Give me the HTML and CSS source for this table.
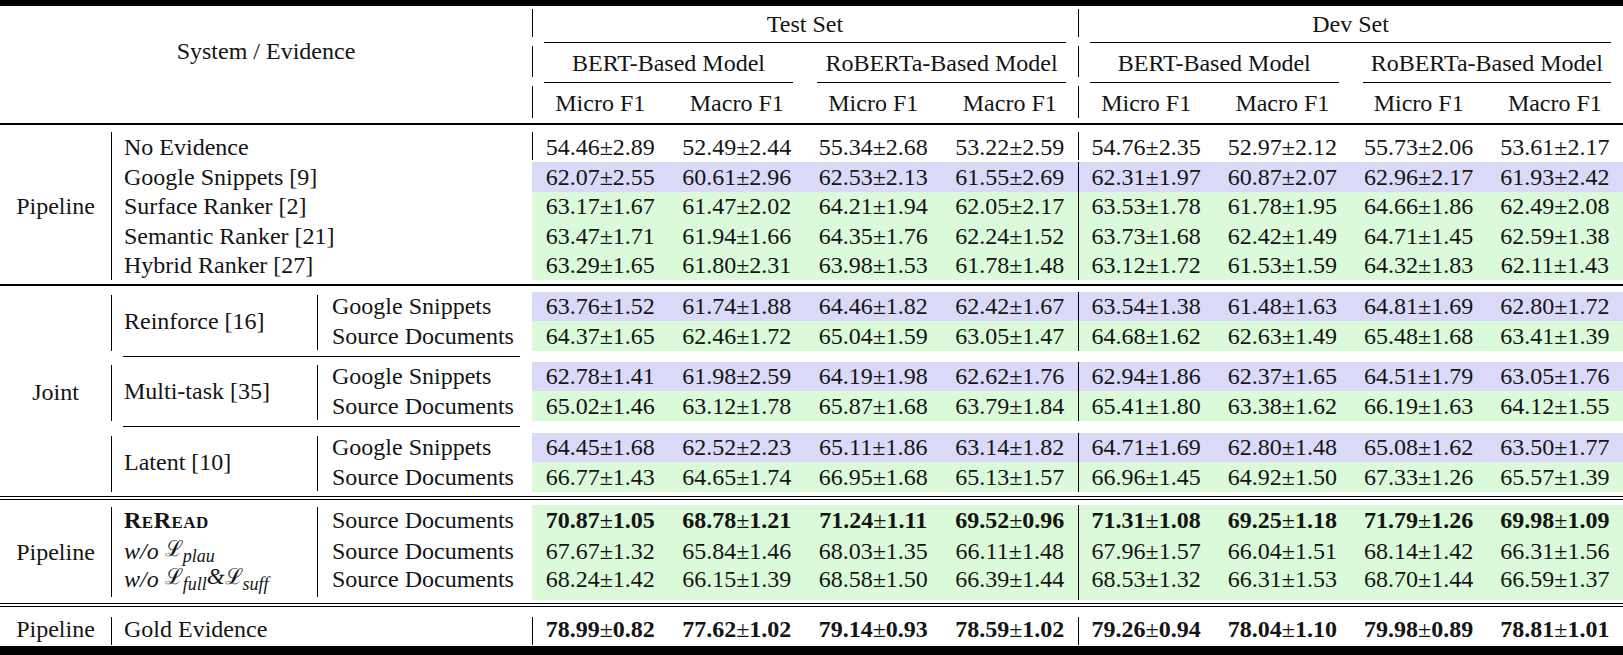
FILE: index.html
```html
<!DOCTYPE html>
<html>
<head>
<meta charset="utf-8">
<link rel="stylesheet" href="styles.css">
</head>
<body>
<div class="table">
  <div class="rule-top"></div>

  <div class="sec head">
    <div class="c sysev">System / Evidence</div>
    <div class="c vl hv t-all">Test Set</div>
    <div class="c vl hv d-all">Dev Set</div>
    <div class="cmid t-all"></div>
    <div class="cmid d-all"></div>
    <div class="c vl hv t-bert">BERT-Based Model</div>
    <div class="c t-rob">RoBERTa-Based Model</div>
    <div class="c vl hv d-bert">BERT-Based Model</div>
    <div class="c d-rob">RoBERTa-Based Model</div>
    <div class="cmid t-bert"></div>
    <div class="cmid t-rob"></div>
    <div class="cmid d-bert"></div>
    <div class="cmid d-rob"></div>
    <div class="c vl hv">Micro F1</div>
    <div class="c">Macro F1</div>
    <div class="c">Micro F1</div>
    <div class="c">Macro F1</div>
    <div class="c vl hv">Micro F1</div>
    <div class="c">Macro F1</div>
    <div class="c">Micro F1</div>
    <div class="c">Macro F1</div>
  </div>
  <div class="rule-mid"></div>

  <div class="sec pipe">
    <div class="c grp">Pipeline</div>

    <div class="c l vl m23 first">No Evidence</div>
    <div class="c vl r1">54.46±2.89</div><div class="c">52.49±2.44</div><div class="c">55.34±2.68</div><div class="c">53.22±2.59</div>
    <div class="c vl r1">54.76±2.35</div><div class="c">52.97±2.12</div><div class="c">55.73±2.06</div><div class="c">53.61±2.17</div>

    <div class="c l vl m23">Google Snippets [9]</div>
    <div class="c b">62.07±2.55</div><div class="c b">60.61±2.96</div><div class="c b">62.53±2.13</div><div class="c b">61.55±2.69</div>
    <div class="c b vl">62.31±1.97</div><div class="c b">60.87±2.07</div><div class="c b">62.96±2.17</div><div class="c b">61.93±2.42</div>

    <div class="c l vl m23">Surface Ranker [2]</div>
    <div class="c g">63.17±1.67</div><div class="c g">61.47±2.02</div><div class="c g">64.21±1.94</div><div class="c g">62.05±2.17</div>
    <div class="c g vl">63.53±1.78</div><div class="c g">61.78±1.95</div><div class="c g">64.66±1.86</div><div class="c g">62.49±2.08</div>

    <div class="c l vl m23">Semantic Ranker [21]</div>
    <div class="c g">63.47±1.71</div><div class="c g">61.94±1.66</div><div class="c g">64.35±1.76</div><div class="c g">62.24±1.52</div>
    <div class="c g vl">63.73±1.68</div><div class="c g">62.42±1.49</div><div class="c g">64.71±1.45</div><div class="c g">62.59±1.38</div>

    <div class="c l vl m23">Hybrid Ranker [27]</div>
    <div class="c g">63.29±1.65</div><div class="c g">61.80±2.31</div><div class="c g">63.98±1.53</div><div class="c g">61.78±1.48</div>
    <div class="c g vl">63.12±1.72</div><div class="c g">61.53±1.59</div><div class="c g">64.32±1.83</div><div class="c g">62.11±1.43</div>
  </div>
  <div class="rule-sec"></div>

  <div class="sec joint">
    <div class="c grp">Joint</div>

    <div class="c l vl meth gtop">Reinforce [16]</div>
    <div class="c l3 vl gtop">Google Snippets</div>
    <div class="c b">63.76±1.52</div><div class="c b">61.74±1.88</div><div class="c b">64.46±1.82</div><div class="c b">62.42±1.67</div>
    <div class="c b vl">63.54±1.38</div><div class="c b">61.48±1.63</div><div class="c b">64.81±1.69</div><div class="c b">62.80±1.72</div>
    <div class="c l3 vl gbot">Source Documents</div>
    <div class="c g">64.37±1.65</div><div class="c g">62.46±1.72</div><div class="c g">65.04±1.59</div><div class="c g">63.05±1.47</div>
    <div class="c g vl">64.68±1.62</div><div class="c g">62.63±1.49</div><div class="c g">65.48±1.68</div><div class="c g">63.41±1.39</div>
    <div class="subrule"></div><div class="filler"></div>

    <div class="c l vl meth gtop">Multi-task [35]</div>
    <div class="c l3 vl gtop">Google Snippets</div>
    <div class="c b">62.78±1.41</div><div class="c b">61.98±2.59</div><div class="c b">64.19±1.98</div><div class="c b">62.62±1.76</div>
    <div class="c b vl">62.94±1.86</div><div class="c b">62.37±1.65</div><div class="c b">64.51±1.79</div><div class="c b">63.05±1.76</div>
    <div class="c l3 vl gbot">Source Documents</div>
    <div class="c g">65.02±1.46</div><div class="c g">63.12±1.78</div><div class="c g">65.87±1.68</div><div class="c g">63.79±1.84</div>
    <div class="c g vl">65.41±1.80</div><div class="c g">63.38±1.62</div><div class="c g">66.19±1.63</div><div class="c g">64.12±1.55</div>
    <div class="subrule"></div><div class="filler"></div>

    <div class="c l vl meth gtop">Latent [10]</div>
    <div class="c l3 vl gtop">Google Snippets</div>
    <div class="c b">64.45±1.68</div><div class="c b">62.52±2.23</div><div class="c b">65.11±1.86</div><div class="c b">63.14±1.82</div>
    <div class="c b vl">64.71±1.69</div><div class="c b">62.80±1.48</div><div class="c b">65.08±1.62</div><div class="c b">63.50±1.77</div>
    <div class="c l3 vl gbot">Source Documents</div>
    <div class="c g">66.77±1.43</div><div class="c g">64.65±1.74</div><div class="c g">66.95±1.68</div><div class="c g">65.13±1.57</div>
    <div class="c g vl">66.96±1.45</div><div class="c g">64.92±1.50</div><div class="c g">67.33±1.26</div><div class="c g">65.57±1.39</div>
  </div>
  <div class="rule-dbl"></div>

  <div class="sec reread">
    <div class="c grp">Pipeline</div>

    <div class="c l vl m2 rtop"><span class="sc">ReRead</span></div>
    <div class="c l3 vl rtop">Source Documents</div>
    <div class="c g"><b>70.87</b>±<b>1.05</b></div><div class="c g"><b>68.78</b>±<b>1.21</b></div><div class="c g"><b>71.24</b>±<b>1.11</b></div><div class="c g"><b>69.52</b>±<b>0.96</b></div>
    <div class="c g vl"><b>71.31</b>±<b>1.08</b></div><div class="c g"><b>69.25</b>±<b>1.18</b></div><div class="c g"><b>71.79</b>±<b>1.26</b></div><div class="c g"><b>69.98</b>±<b>1.09</b></div>

    <div class="c l vl m2"><span class="it">w/o</span>&nbsp;<span class="math">ℒ<sub>plau</sub></span></div>
    <div class="c l3 vl">Source Documents</div>
    <div class="c g">67.67±1.32</div><div class="c g">65.84±1.46</div><div class="c g">68.03±1.35</div><div class="c g">66.11±1.48</div>
    <div class="c g vl">67.96±1.57</div><div class="c g">66.04±1.51</div><div class="c g">68.14±1.42</div><div class="c g">66.31±1.56</div>

    <div class="c l vl m2 rbot"><span class="it">w/o</span>&nbsp;<span class="math">ℒ<sub>full</sub><span class="amp">&amp;</span>ℒ<sub>suff</sub></span></div>
    <div class="c l3 vl rbot">Source Documents</div>
    <div class="c g rbotd">68.24±1.42</div><div class="c g rbotd">66.15±1.39</div><div class="c g rbotd">68.58±1.50</div><div class="c g rbotd">66.39±1.44</div>
    <div class="c g vl rbotd">68.53±1.32</div><div class="c g rbotd">66.31±1.53</div><div class="c g rbotd">68.70±1.44</div><div class="c g rbotd">66.59±1.37</div>
  </div>
  <div class="rule-dbl2"></div>

  <div class="sec gold">
    <div class="c grp">Pipeline</div>
    <div class="c l vl m23 gv">Gold Evidence</div>
    <div class="c vl gv"><b>78.99</b>±<b>0.82</b></div><div class="c"><b>77.62</b>±<b>1.02</b></div><div class="c"><b>79.14</b>±<b>0.93</b></div><div class="c"><b>78.59</b>±<b>1.02</b></div>
    <div class="c vl gv"><b>79.26</b>±<b>0.94</b></div><div class="c"><b>78.04</b>±<b>1.10</b></div><div class="c"><b>79.98</b>±<b>0.89</b></div><div class="c"><b>78.81</b>±<b>1.01</b></div>
  </div>
  <div class="rule-bot"></div>
</div>
</body>
</html>
```

FILE: styles.css
```css
html, body {
  margin: 0;
  padding: 0;
  background: #ffffff;
}

body {
  font-family: "Liberation Serif", "DejaVu Serif", serif;
  font-size: 24px;
  color: #141414;
}

.table {
  width: 1623px;
}

.sec {
  display: grid;
  grid-template-columns: 111px 206px 215px repeat(4, 136.5px) repeat(4, 136.25px);
}

.c {
  display: flex;
  align-items: center;
  justify-content: center;
  white-space: nowrap;
  line-height: 1;
}

.l {
  justify-content: flex-start;
  padding-left: 13px;
}

.l3 {
  justify-content: flex-start;
  padding-left: 15px;
}

/* vertical rule drawn as a 1px background stripe with optional gaps */
.vl {
  --vt: 0px;
  --vb: 0px;
  background-image: linear-gradient(#000, #000);
  background-repeat: no-repeat;
  background-size: 1px calc(100% - var(--vt) - var(--vb));
  background-position: 0 var(--vt);
}

.b { background-color: #dadaf8; }
.g { background-color: #dafad9; }

/* rules */
.rule-top { height: 6px; background: #000; }
.rule-mid { height: 2px; background: #000; }
.rule-sec {
  height: 1.5px;
  background: #000;
  margin-top: 4px;
  margin-bottom: 6px;
}
.rule-dbl {
  height: 2px;
  border-top: 1px solid #000;
  border-bottom: 1px solid #000;
  margin-top: 4px;
  margin-bottom: 5px;
}
.rule-dbl2 {
  height: 2px;
  border-top: 1px solid #000;
  border-bottom: 1px solid #000;
  margin-top: 3px;
  margin-bottom: 1px;
}
.rule-bot { height: 9px; background: #000; }

/* header */
.head {
  grid-template-rows: 36px 1px 39px 1px 40px;
}
.sysev {
  grid-column: 1 / 4;
  grid-row: 1 / -1;
  align-items: flex-start;
  padding-top: 33px;
}
.hv { --vt: 3px; --vb: 5px; }
.t-all { grid-column: 4 / 8; }
.d-all { grid-column: 8 / 12; }
.t-bert { grid-column: 4 / 6; }
.t-rob { grid-column: 6 / 8; }
.d-bert { grid-column: 8 / 10; }
.d-rob { grid-column: 10 / 12; }
.cmid {
  background: #000;
  margin: 0 12px;
}

/* pipeline */
.pipe {
  grid-template-rows: 30px 29.5px 29.5px 29.5px 29.5px;
  padding-top: 7px;
}
.grp {
  grid-column: 1;
  grid-row: 1 / -1;
}
.m23 { grid-column: 2 / 4; }
.r1 { --vb: 2px; }

/* joint */
.joint {
  grid-template-rows: 29.5px 29.5px 11px 29.5px 29.5px 12px 29.5px 29.5px;
}
.meth {
  grid-column: 2;
  grid-row: span 2;
  --vt: 3px;
}
.gtop { --vt: 3px; }
.gbot { --vb: 1px; }
.subrule {
  grid-column: 2 / 4;
  align-self: center;
  height: 1px;
  background: #000;
  margin: 0 12px;
}
.filler {
  grid-column: 4 / 12;
}

/* reread */
.reread {
  grid-template-rows: 31px 31px 33px;
}
.m2 { grid-column: 2; }
.rtop { --vt: 2px; }
.rbot { --vb: 3px; padding-bottom: 9px; }
.rbotd { padding-bottom: 9px; }
.sc {
  font-variant: small-caps;
  font-weight: bold;
  letter-spacing: 0.5px;
}
.it { font-style: italic; }
.math {
  font-family: "DejaVu Serif", "Liberation Serif", serif;
  font-size: 22px;
}
.math sub {
  font-family: "Liberation Serif", serif;
  font-style: italic;
  font-size: 18px;
  vertical-align: -6px;
  line-height: 1;
}
.amp {
  font-family: "Liberation Serif", serif;
  font-style: italic;
  font-size: 23px;
}

/* gold */
.gold {
  grid-template-rows: 38px;
}
.gold .c { padding-top: 4px; }
.gv { --vt: 9px; --vb: 1px; }
```
